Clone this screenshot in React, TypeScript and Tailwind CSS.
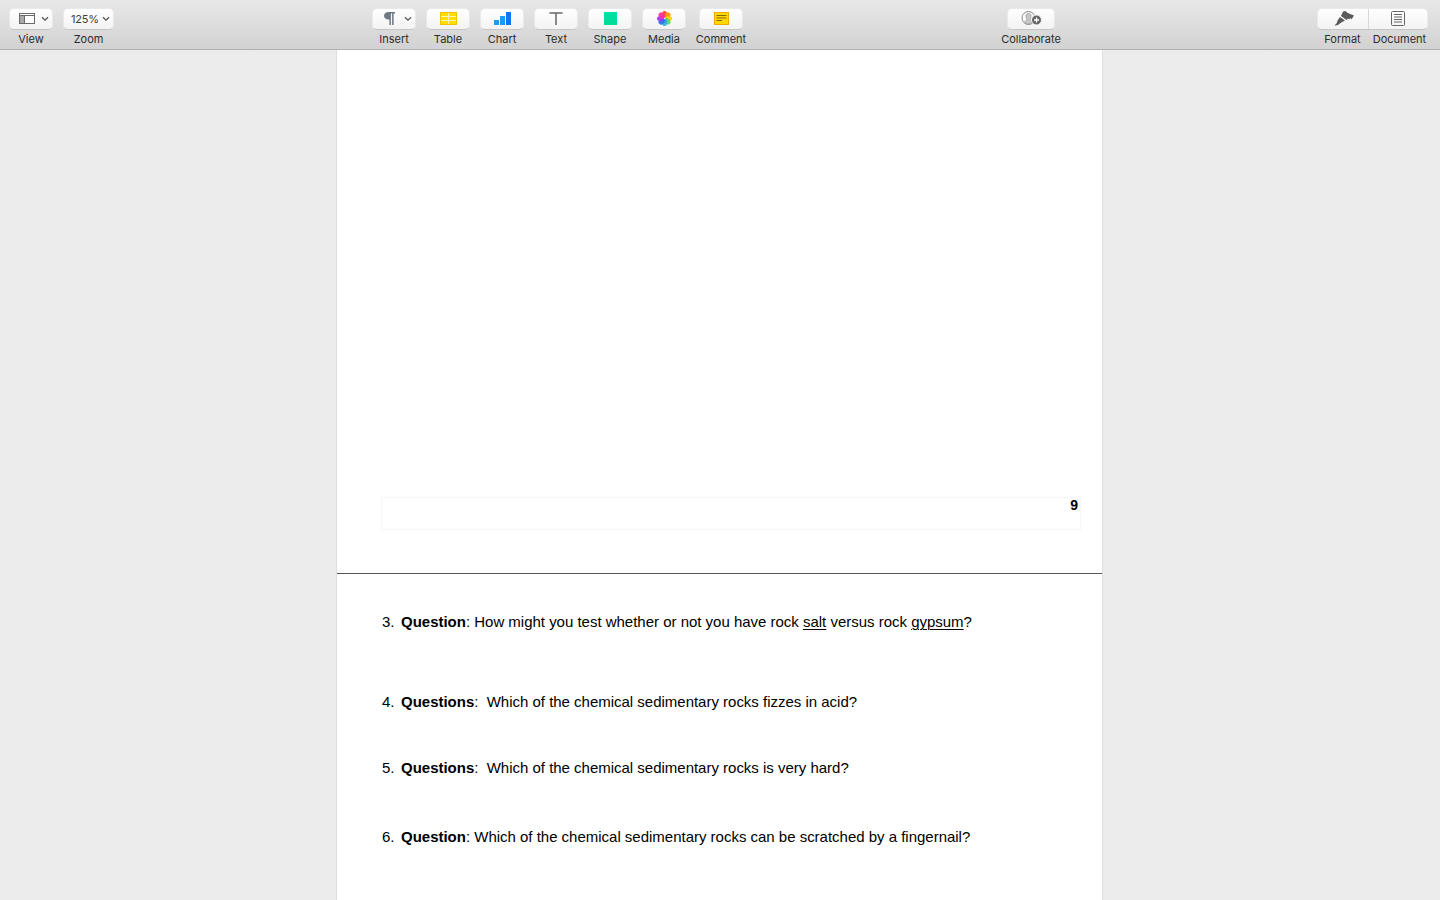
import React from "react";

const Chev = ({ className = "" }: { className?: string }) => (
  <svg width="8" height="6" viewBox="0 0 8 6" className={className} fill="none" stroke="#555" strokeWidth="1.3">
    <path d="M1 1.2 L4 4.2 L7 1.2" />
  </svg>
);

const Btn = ({ w, children }: { w: string; children: React.ReactNode }) => (
  <div className={`${w} h-[22px] flex items-center justify-center rounded-[5px] bg-gradient-to-b from-white to-[#f3f3f3] border border-[#e9e9e9] border-b-[#c6c6c6]`}>
    {children}
  </div>
);

const Label = ({ children }: { children: React.ReactNode }) => (
  <div className="h-[12px] mt-[3px] text-[11px] leading-[12px] text-[#2c2c2c] whitespace-nowrap font-['Inter',sans-serif]">{children}</div>
);

const Item = ({ className, label, btnW, children }: { className: string; label: string; btnW: string; children: React.ReactNode }) => (
  <div className={`flex flex-col items-center ${className}`}>
    <Btn w={btnW}>{children}</Btn>
    <Label>{label}</Label>
  </div>
);

const petals = ["#ff3b30", "#ff9500", "#ffcc00", "#4cd964", "#34aadc", "#2f6fe8", "#a033fc", "#ff2d9b"];

const Q = ({ n, className, children }: { n: string; className: string; children: React.ReactNode }) => (
  <div className={`flex leading-[18px] ${className}`}>
    <span className="w-[20px] pl-[1px]">{n}</span>
    <span className="whitespace-pre tracking-[-0.012px]">{children}</span>
  </div>
);

const U = ({ children }: { children: React.ReactNode }) => (
  <span className="underline decoration-[1px] underline-offset-[2px]">{children}</span>
);

export default function App() {
  return (
    <div className="h-[900px] overflow-hidden bg-[#ececec] flex flex-col font-['Liberation_Sans',Arial,sans-serif]">
      <div className="h-[50px] shrink-0 flex pt-[8px] pl-[9px] bg-gradient-to-b from-[#e8e8e8] to-[#d2d2d2] border-b border-[#b1b1b1]">
        <Item className="w-[44px]" label="View" btnW="w-[44px]">
          <svg width="16" height="11" viewBox="0 0 16 11" className="ml-[6px] mr-[6px] -mt-[1px]">
            <rect x="0.5" y="0.5" width="15" height="10" fill="#fff" stroke="#6a6a6a" />
            <rect x="1" y="3" width="4.5" height="7" fill="#aaa" />
            <path d="M0.5 2.5H15.5M5.5 3V10" stroke="#6a6a6a" />
          </svg>
          <Chev />
        </Item>
        <Item className="w-[51px] ml-[10px]" label="Zoom" btnW="w-[51px]">
          <span className="ml-[4px] text-[11px] tracking-[-0.2px] text-[#404040] mr-[3px] font-['Inter',sans-serif]">125%</span>
          <Chev />
        </Item>
        <Item className="w-[44px] ml-[258px]" label="Insert" btnW="w-[44px]">
          <svg width="11" height="13" viewBox="0 0 11 13" className="mr-[9px] ml-[7px] -mt-[1px]" fill="#6d7883">
            <path d="M5 0H11V1.4H9.6V13H8.1V1.4H6.9V13H5.4V7.4H4.6C2 7.4 0 6 0 3.7 0 1.4 2 0 5 0Z" />
          </svg>
          <Chev />
        </Item>
        <Item className="w-[44px] ml-[10px]" label="Table" btnW="w-[44px]">
          <svg width="17" height="13" viewBox="0 0 17 13" className="-mt-[1px]">
            <rect width="17" height="13" fill="#ffdd00" />
            <path d="M0 4.5H17M0 8.5H17M8.5 0V13" stroke="#fff7b8" strokeWidth="1" />
            <rect x="0.5" y="0.5" width="16" height="12" fill="none" stroke="#ecc400" />
          </svg>
        </Item>
        <Item className="w-[44px] ml-[10px]" label="Chart" btnW="w-[44px]">
          <svg width="17" height="13" viewBox="0 0 17 13" className="-mt-[1px]">
            <rect x="0" y="8" width="5" height="5" fill="#1a9cf5" />
            <rect x="6" y="4" width="5" height="9" fill="#1a9cf5" />
            <rect x="12" y="0" width="5" height="13" fill="#0b78ee" />
          </svg>
        </Item>
        <Item className="w-[44px] ml-[10px]" label="Text" btnW="w-[44px]">
          <svg width="14" height="13" viewBox="0 0 14 13" fill="none" stroke="#666" strokeWidth="1.5" className="-mt-[1px]">
            <path d="M0.5 1H13.5M7 1V13" />
          </svg>
        </Item>
        <Item className="w-[44px] ml-[10px]" label="Shape" btnW="w-[44px]">
          <div className="w-[13px] h-[13px] -mt-[1px] bg-gradient-to-b from-[#00e0a8] to-[#00dc94]" />
        </Item>
        <Item className="w-[44px] ml-[10px]" label="Media" btnW="w-[44px]">
          <svg width="15" height="15" viewBox="-8 -8 16 16" className="-mt-[1px]">
            {petals.map((c, i) => (
              <ellipse key={c} cx="0" cy="-4.2" rx="2.8" ry="3.9" fill={c} fillOpacity="0.92" transform={`rotate(${i * 45})`} />
            ))}
            <circle r="0.7" fill="#fff" />
          </svg>
        </Item>
        <Item className="w-[44px] ml-[13px]" label="Comment" btnW="w-[44px]">
          <svg width="15" height="13" viewBox="0 0 15 13" className="-mt-[1px]">
            <rect x="0.5" y="0.5" width="14" height="12" fill="#ffd800" stroke="#eeaa00" />
            <path d="M2.5 3.5H12.5M2.5 6H12.5M2.5 8.5H8" stroke="#7f6a00" strokeWidth="1" />
          </svg>
        </Item>
        <Item className="w-[48px] ml-[264px]" label="Collaborate" btnW="w-[48px]">
          <svg width="21" height="15" viewBox="0 0 21 15" fill="none" className="-mt-[1px]">
            <circle cx="7.5" cy="7" r="6.5" stroke="#8a8a8a" />
            <path d="M7.5 2.2C9.4 2.2 10.3 3.7 10 5.6 9.8 7 9.2 7.9 9.2 8.7 9.2 9.5 10.8 10 11.6 11 10.6 12.5 9.2 13 7.5 13S4.4 12.5 3.4 11C4.2 10 5.8 9.5 5.8 8.7 5.8 7.9 5.2 7 5 5.6 4.7 3.7 5.6 2.2 7.5 2.2Z" fill="#c6c6c6" stroke="#9a9a9a" strokeWidth="0.7" />
            <circle cx="15.5" cy="9" r="5" fill="#666" stroke="#f4f4f4" strokeWidth="1" />
            <path d="M13 9H18M15.5 6.5V11.5" stroke="#fff" strokeWidth="1.3" />
          </svg>
        </Item>
        <div className="ml-[262px] flex flex-col">
          <div className="w-[111px] h-[22px] flex rounded-[5px] bg-gradient-to-b from-white to-[#f3f3f3] border border-[#e9e9e9] border-b-[#c6c6c6]">
            <div className="w-[51px] flex items-center justify-center border-r border-[#d8d8d8]">
              <svg width="20" height="15" viewBox="0 0 20 15" fill="#5a5a5a" className="-mt-[1px] ml-[1px]">
                <path d="M9 0.5 L11.5 0 L13 1.5 L16 3 L20 4.5 L17.5 8.5 L16.5 7 L15 8.5 L14 7.5 L12.5 9 L7 5 Z" />
                <path d="M6 6 L11 9.5 L6.5 12 Q3.5 15 0.5 14.5 Q3.5 12.5 3.5 9.5 Z" />
              </svg>
            </div>
            <div className="flex-1 flex items-center justify-center">
              <svg width="14" height="15" viewBox="0 0 14 15" fill="none" stroke="#666" className="-mt-[1px]">
                <rect x="0.5" y="0.5" width="13" height="14" rx="1" />
                <path d="M3 3.5H11M3 6H11M3 8.5H11M3 11H11" />
              </svg>
            </div>
          </div>
          <div className="flex">
            <div className="w-[51px] text-center"><Label>Format</Label></div>
            <div className="flex-1 flex justify-center pl-[3px]"><Label>Document</Label></div>
          </div>
        </div>
      </div>
      <div className="w-[767px] ml-[336px] flex-1 bg-white border-x border-[#dedede] flex flex-col text-black">
        <div className="h-[524px] shrink-0 flex flex-col justify-end pb-[43px] pl-[44px] border-b border-[#555]">
          <div className="w-[700px] h-[33px] border border-[#f6f6f6] flex justify-end pr-[2px]">
            <span className="text-[14px] leading-[14px] font-bold">9</span>
          </div>
        </div>
        <div className="pl-[44px] text-[15px] flex flex-col">
          <Q n="3." className="mt-[39px]"><b>Question</b>: How might you test whether or not you have rock <U>salt</U> versus rock <U>gypsum</U>?</Q>
          <Q n="4." className="mt-[62px]"><b>Questions</b>:  Which of the chemical sedimentary rocks fizzes in acid?</Q>
          <Q n="5." className="mt-[48px]"><b>Questions</b>:  Which of the chemical sedimentary rocks is very hard?</Q>
          <Q n="6." className="mt-[51px]"><b>Question</b>: Which of the chemical sedimentary rocks can be scratched by a fingernail?</Q>
        </div>
      </div>
    </div>
  );
}
